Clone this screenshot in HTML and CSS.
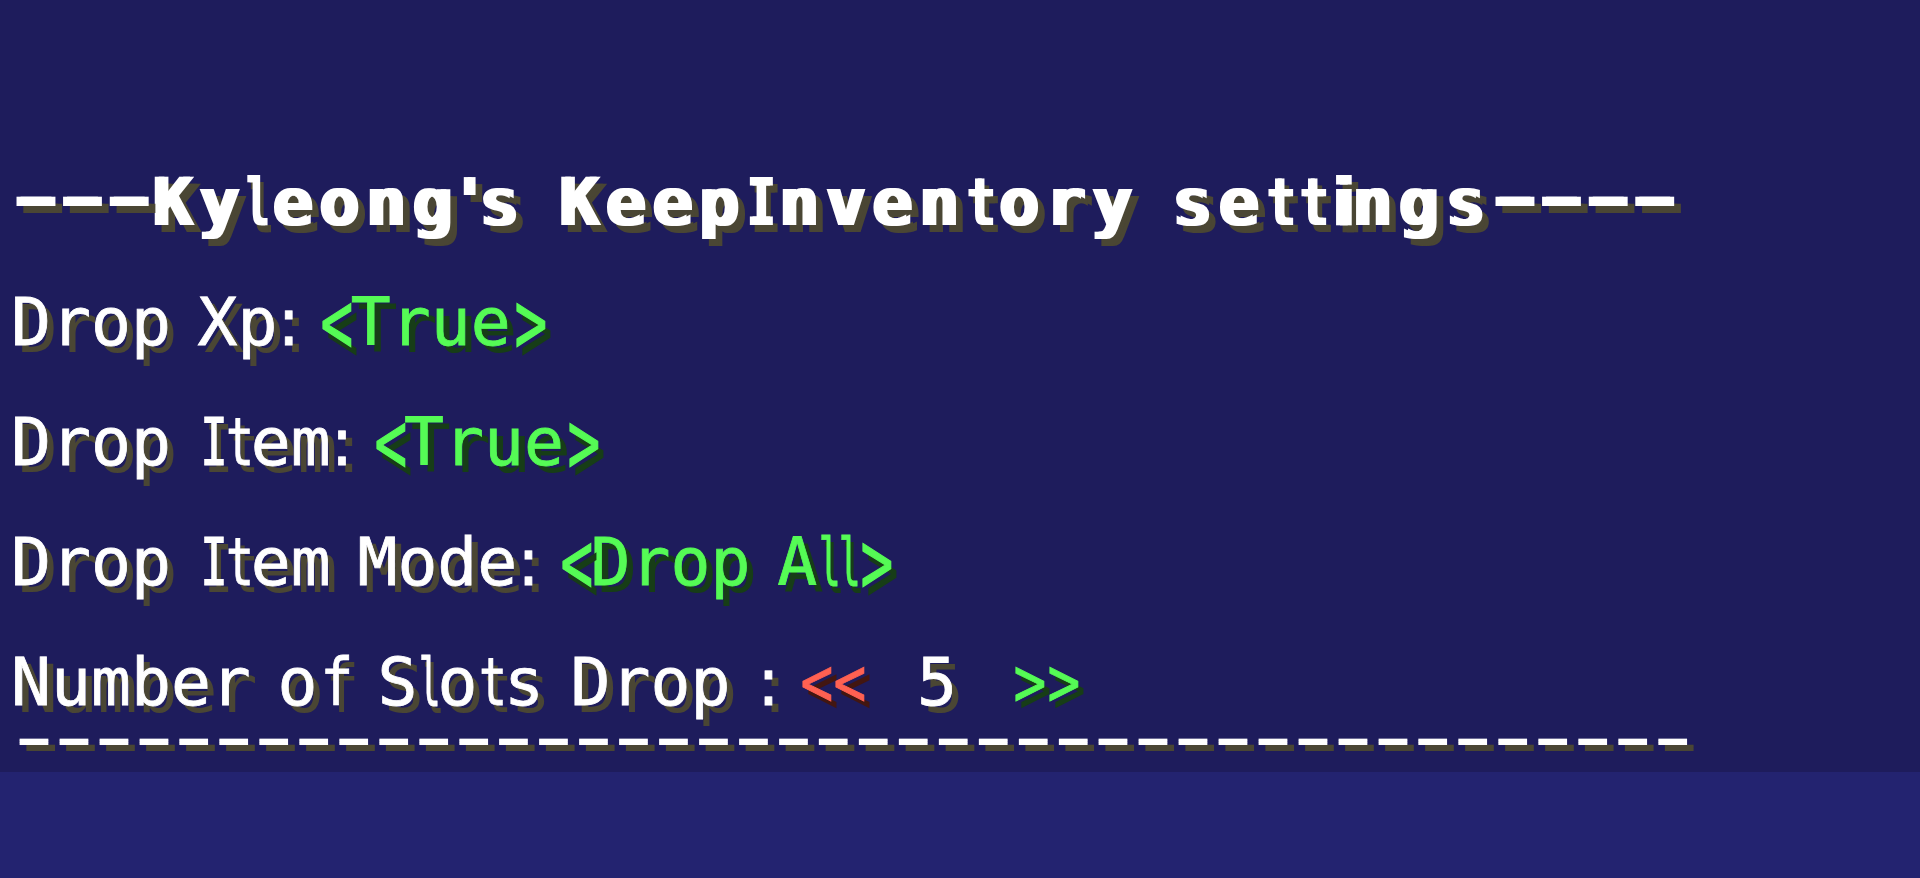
FILE: index.html
```html
<!DOCTYPE html>
<html lang="en">
<head>
<meta charset="utf-8">
<title>KeepInventory settings</title>
<link rel="stylesheet" href="styles.css">
</head>
<body>
<main class="screen">
  <section class="chat">
    <div class="msg">
      <div class="line title"><span class="dash dash-b3">---</span>Ky<span class="n3">l</span>eong<span class="n2">'</span>s Keep<span class="n4">I</span>nven<span class="n4">t</span>ory se<span class="n4">t</span><span class="n4">t</span><span class="n2">i</span>ngs<span class="dash dash-b4">----</span></div>
    </div>
    <div class="msg">
      <div class="line">Drop Xp<span class="n2">:</span> <span class="on"><span class="n5 ang">&lt;</span>True<span class="n5 ang">&gt;</span></span></div>
    </div>
    <div class="msg">
      <div class="line">Drop <span class="n4">I</span><span class="n4">t</span>em<span class="n2">:</span> <span class="on"><span class="n5 ang">&lt;</span>True<span class="n5 ang">&gt;</span></span></div>
    </div>
    <div class="msg">
      <div class="line">Drop <span class="n4">I</span><span class="n4">t</span>em Mode<span class="n2">:</span> <span class="on"><span class="n5 ang">&lt;</span>Drop A<span class="n3">l</span><span class="n3">l</span><span class="n5 ang">&gt;</span></span></div>
    </div>
    <div class="msg">
      <div class="line tight">Number o<span class="n5">f</span> S<span class="n3">l</span>o<span class="n4">t</span>s Drop <span class="n2">:</span> <span class="off"><span class="n5 ang">&lt;</span><span class="n5 ang">&lt;</span></span>  5  <span class="on"><span class="n5 ang">&gt;</span><span class="n5 ang">&gt;</span></span></div>
      <div class="line"><span class="rule">------------------------------------------</span></div>
    </div>
  </section>
  <div class="input-band"></div>
</main>
</body>
</html>
```

FILE: styles.css
```css
:root {
  --px: 6.667px;
  --shade: #4a4634;
  --green: #55fb55;
  --green-shade: #173d17;
  --red: #ff6152;
  --red-shade: #421611;
}

html, body {
  margin: 0;
  padding: 0;
  background: #1e1c5c;
}

body {
  font-family: "DejaVu Sans Mono", "Liberation Mono", monospace;
  font-size: 66.4px;
  color: #ffffff;
}

.screen {
  display: flex;
  flex-direction: column;
  height: 878px;
  overflow: hidden;
}

.chat {
  height: 772px;
  flex: none;
  display: flex;
  flex-direction: column;
  justify-content: flex-end;
  gap: 60px;
  padding-left: 11px;
  background: #1e1c5c;
}

.input-band {
  flex: 1;
  background: #232370;
}

.line {
  height: 60px;
  line-height: 60px;
  white-space: pre;
  word-spacing: -13.333px;
  -webkit-text-stroke: 0.8px currentColor;
  text-shadow: var(--px) var(--px) 0 var(--shade);
}

/* bold: glyph drawn twice side by side, each with its shadow */
.title {
  font-weight: 700;
  letter-spacing: var(--px);
  -webkit-text-stroke: 0;
  text-shadow: 4px 0 0 #fff, var(--px) var(--px) 0 var(--shade), 10.667px var(--px) 0 var(--shade);
}

/* narrow glyphs: advances cut down to the pixel font's widths */
.n5, .n4, .n3, .n2 {
  display: inline-block;
  transform-origin: 20px 50%;
}

.n5 { width: 33.333px; letter-spacing: -6.667px; transform: scaleX(0.82); }
.n4 { width: 26.667px; letter-spacing: -13.333px; transform: translateX(-4px) scaleX(0.7); }
.n3 { width: 20px; letter-spacing: -20px; transform: translateX(-7.3px) scaleX(0.55); }

/* angle brackets stand the full cap height */
.n5.ang { transform: scale(0.82, 1.35); }
.tight .n5.ang { transform: scale(0.82, 1.05); }

/* one-pixel glyphs (: ' i) come from the proportional face, which is already slim */
.n2 {
  width: 13.333px;
  font-family: "DejaVu Sans", "Liberation Sans", sans-serif;
  letter-spacing: -9px;
}

.title .n5 { width: 40px; letter-spacing: 0; }
.title .n4 { width: 33.333px; letter-spacing: -6.667px; }
.title .n3 { width: 26.667px; letter-spacing: -13.333px; }
.title .n2 { width: 20px; letter-spacing: -5px; }

.on {
  color: var(--green);
  text-shadow: var(--px) var(--px) 0 var(--green-shade);
}

.off {
  color: var(--red);
  text-shadow: var(--px) var(--px) 0 var(--red-shade);
}

/* hyphens stretched to the wide pixel-font dash */
.dash {
  display: inline-block;
  transform-origin: 0 50%;
  transform: translate(-11px, -5px) scaleX(1.7);
}

.dash-b3,
.dash-b4 {
  letter-spacing: -12.55px;
  text-shadow: 2.35px 0 0 #fff, 3.92px var(--px) 0 var(--shade), 6.27px var(--px) 0 var(--shade);
}

.dash-b3 { width: 140px; }
.dash-b4 { width: 186.667px; }

/* closing rule: small hyphens widened and thickened into pixel dashes */
.rule {
  display: inline-block;
  font-size: 28px;
  line-height: 30px;
  letter-spacing: -6.94px;
  -webkit-text-stroke: 0;
  transform-origin: 0 50%;
  transform: translate(-11px, -17.4px) scaleX(4.03);
  text-shadow:
    0 2.1px 0 #fff,
    0 4.2px 0 #fff,
    1.65px 6.667px 0 var(--shade),
    1.65px 8.77px 0 var(--shade),
    1.65px 10.87px 0 var(--shade);
}
```
